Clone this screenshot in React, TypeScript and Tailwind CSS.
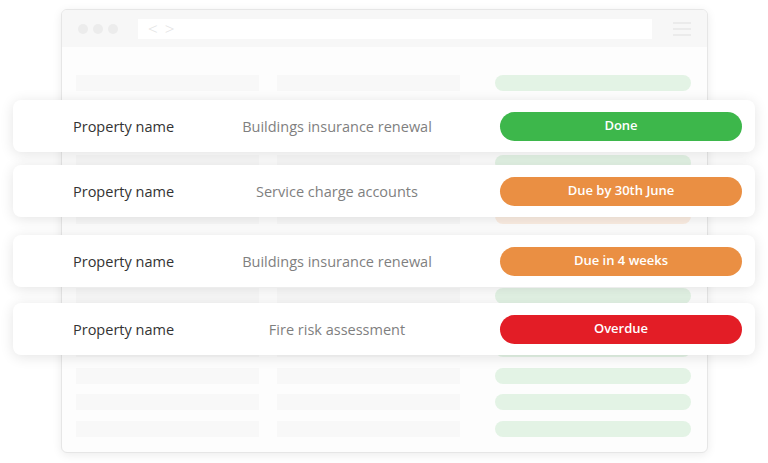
import React from "react";

const rows = Array.from({ length: 14 }, (_, i) => i);

const cards = [
  { name: "Property name", task: "Buildings insurance renewal", status: "Done", color: "bg-[#3db74b]", mt: "mt-0" },
  { name: "Property name", task: "Service charge accounts", status: "Due by 30th June", color: "bg-[#ea8f43]", mt: "mt-[13px]" },
  { name: "Property name", task: "Buildings insurance renewal", status: "Due in 4 weeks", color: "bg-[#ea8f43]", mt: "mt-[18px]" },
  { name: "Property name", task: "Fire risk assessment", status: "Overdue", color: "bg-[#e31d26]", mt: "mt-[16px]" },
];

export default function App() {
  return (
    <div className="relative w-[768px] h-[463px] bg-white overflow-hidden" style={{ fontFamily: '"Open Sans", "Noto Sans", sans-serif' }}>
      <div className="ml-[61px] mt-[9px] w-[647px] h-[444px] rounded-[6px] border border-[#e6e6e6] bg-[#fdfdfd] shadow-[0_2px_10px_rgba(0,0,0,0.08)] overflow-hidden">
        <div className="h-[37px] bg-[#f7f7f7] flex items-center pl-[16px] pr-[16px]">
          <div className="flex gap-[5px]">
            <div className="w-[10px] h-[10px] rounded-full bg-[#ececec]" />
            <div className="w-[10px] h-[10px] rounded-full bg-[#ececec]" />
            <div className="w-[10px] h-[10px] rounded-full bg-[#ececec]" />
          </div>
          <div className="ml-[20px] flex-1 h-[20px] bg-white flex items-center pl-[10px] gap-[7px] text-[#e2e2e2] text-[17px] font-light leading-none">
            <span>&lt;</span>
            <span>&gt;</span>
          </div>
          <div className="ml-[21px] w-[18px] flex flex-col gap-[4px]">
            <div className="h-[2px] bg-[#ebebeb]" />
            <div className="h-[2px] bg-[#ebebeb]" />
            <div className="h-[2px] bg-[#ebebeb]" />
          </div>
        </div>
        <div className="pt-[28px] pl-[14px] pr-[16px] flex flex-col gap-[10.6px]">
          {rows.map((i) => (
            <div key={i} className="flex h-[16px]">
              <div className="w-[183px] bg-[#f8f8f8]" />
              <div className="ml-[18px] w-[183px] bg-[#f8f8f8]" />
              <div className={`ml-[35px] flex-1 rounded-full ${i === 5 ? "bg-[#fbede2]" : "bg-[#e3f3e5]"}`} />
            </div>
          ))}
        </div>
      </div>

      <div className="absolute left-[13px] top-[100px] w-[742px] flex flex-col">
        {cards.map((c, i) => (
          <div
            key={i}
            className={`${c.mt} h-[52px] rounded-[8px] bg-white shadow-[0_2px_14px_rgba(0,0,0,0.11)] flex items-center`}
          >
            <div className="pl-[60px] w-[210px] pt-[1px] text-[14.5px] text-[#333333] font-medium">{c.name}</div>
            <div className="w-[228px] pt-[1px] text-center text-[14.5px] text-[#7f7f7f]">{c.task}</div>
            <div className={`ml-[49px] w-[242px] h-[29px] rounded-full ${c.color} flex items-center justify-center text-white text-[13px] font-semibold`}>
              {c.status}
            </div>
          </div>
        ))}
      </div>
    </div>
  );
}
